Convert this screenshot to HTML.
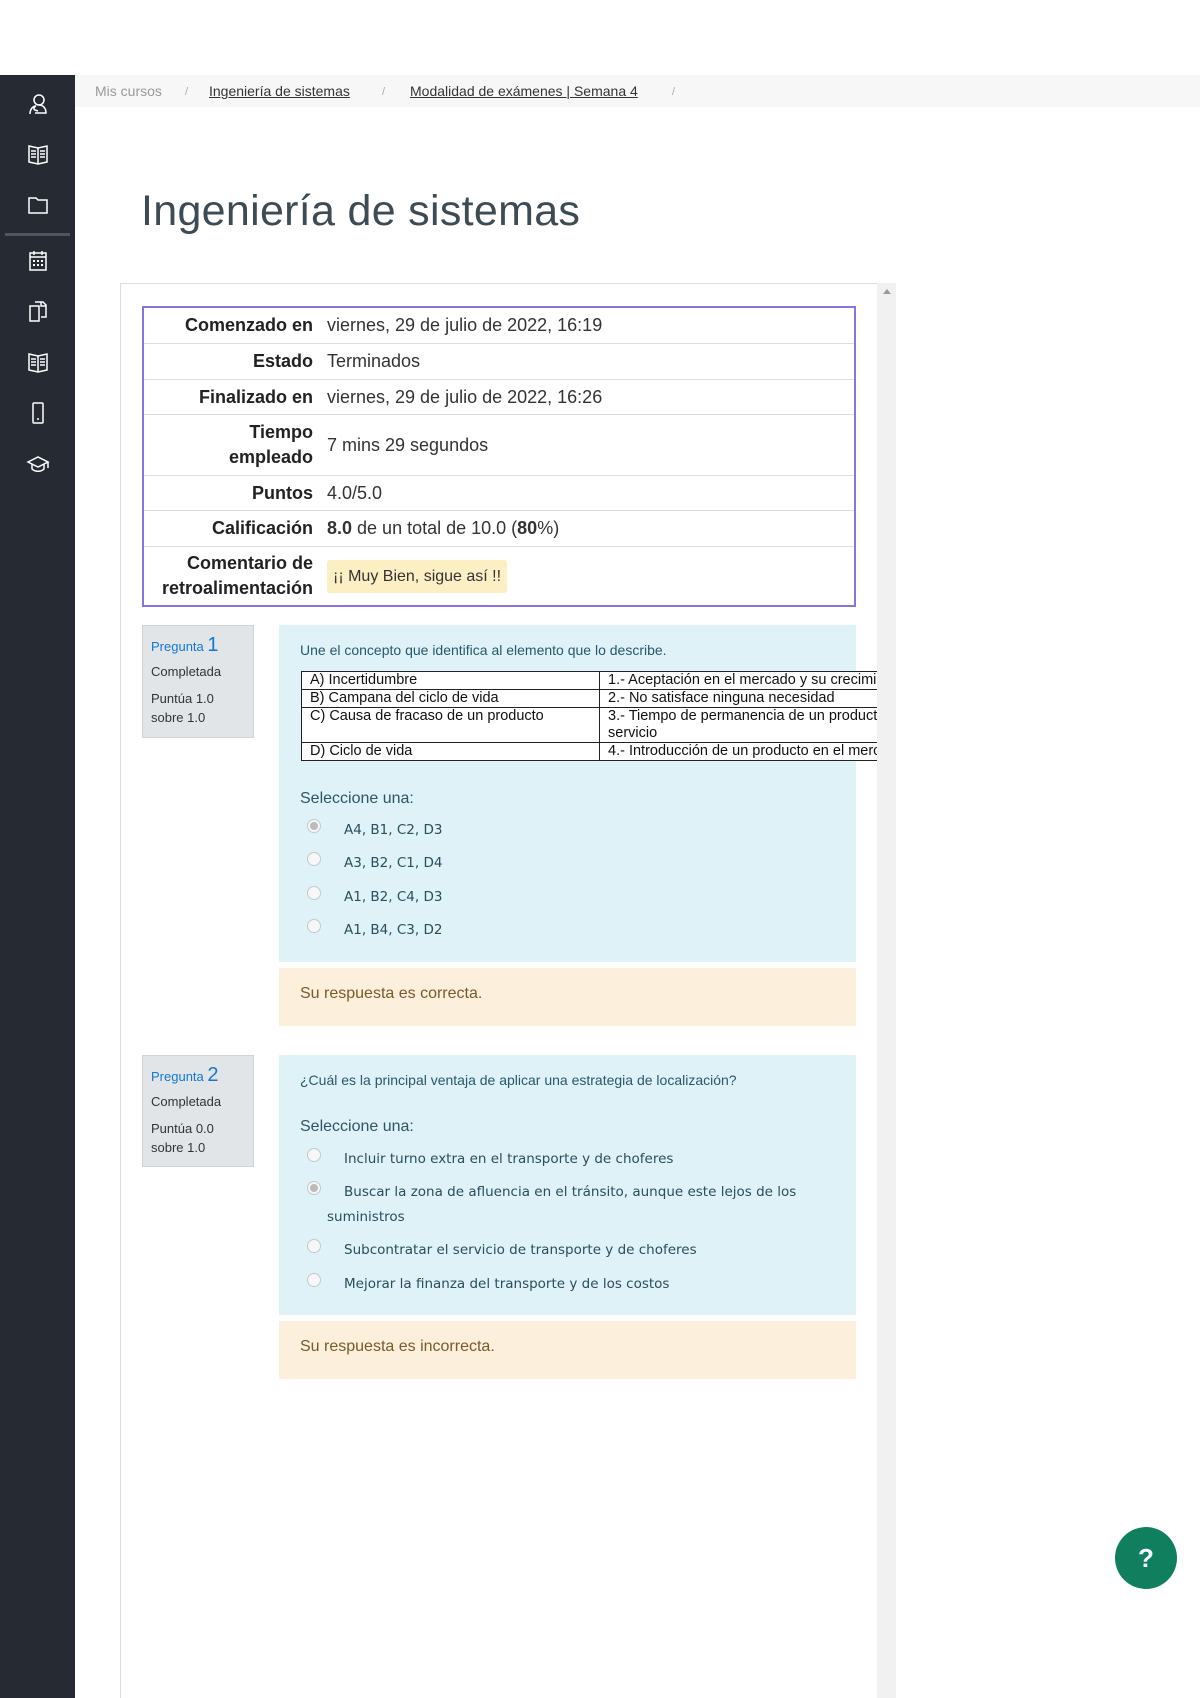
<!DOCTYPE html>
<html><head><meta charset="utf-8"><style>
*{box-sizing:border-box;margin:0;padding:0}
body{width:1200px;height:1698px;position:relative;background:#fff;font-family:"Liberation Sans","DejaVu Sans",sans-serif;color:#333;overflow:hidden}
.abs{position:absolute}
#side{left:0;top:75px;width:75px;height:1623px;background:#252a33}
.ic{position:absolute;left:26px;width:24px;height:24px}
#bc{left:75px;top:75px;width:1125px;height:32px;background:#f7f7f7;font-size:14px;color:#444}
#bc span{position:absolute;top:8px}
#bc u{color:#333}
h1{position:absolute;left:141px;top:187px;font-size:43px;font-weight:400;color:#3d4b55;letter-spacing:0.3px}
#box{left:120px;top:283px;width:758px;height:1415px;border:1px solid #ddd;border-bottom:none}
#sb{left:877px;top:283px;width:19px;height:1415px;background:#f1f1f1}
#sum{left:142px;top:306px;width:714px;height:301px;border:2px solid #8a73e0}
.r{position:absolute;left:0;width:710px;border-bottom:1px solid #ddd;font-size:18px}
.r .l{position:absolute;right:541px;text-align:right;font-weight:bold;color:#222;line-height:25px}
.r .v{position:absolute;left:183px;color:#333;line-height:25px}
.info{background:#e1e5e8;border:1px solid #cfd4d8;width:112px;font-size:13px;color:#333;padding:10px 8px;line-height:19px}
.info .p{color:#1177d1;font-size:13px}
.info .p b{font-size:20px;font-weight:400}
.qc{background:#def2f8;width:577px}
.fb{background:#fcefdc;width:577px;height:58px;font-size:16px;color:#7a5a2a;padding:17px 21px}
.t{font-size:14px;color:#28586a}
.sel{font-size:16px;color:#2f5563}
.opt{position:absolute;left:28px;font-family:"DejaVu Sans",sans-serif;font-size:13.5px;color:#2a4e5a}
.opt i{position:absolute;left:0;top:-2px;width:14px;height:14px;border:1px solid #c5c9cc;border-radius:50%;background:#f6f7f8}
.opt i.on::after{content:"";position:absolute;left:2px;top:2px;width:8px;height:8px;border-radius:50%;background:#bbb}
.opt span{position:absolute;left:37px;top:1px;white-space:nowrap}
table{border-collapse:collapse;font-size:14.5px;color:#111;background:#fff}
td{border:1px solid #222;padding:0 8px;line-height:17px;vertical-align:top;white-space:nowrap;overflow:hidden}
</style></head><body>
<div id="side" class="abs">
<svg class="ic" style="top:17px" viewBox="0 0 24 24" fill="none" stroke="#fff" stroke-width="1.5"><circle cx="13" cy="8" r="5"/><path d="M4 22c0-5 3-8 6-8M10 14c-2 1-3 3-1 4l3 1M13 13c4 0 7 3 7 8H9"/></svg>
<svg class="ic" style="top:67px" viewBox="0 0 24 24" fill="none" stroke="#fff" stroke-width="1.5"><path d="M3 4l9 2 9-2v16l-9 2-9-2zM12 6v16M5 9h5M5 12h5M5 15h5M14 9h5M14 12h5M14 15h5"/></svg>
<svg class="ic" style="top:118px" viewBox="0 0 24 24" fill="none" stroke="#fff" stroke-width="1.5"><path d="M3 5h7l2 2h9v13H3z"/></svg>
<div class="abs" style="left:5px;top:158px;width:65px;height:3px;background:#4c5560"></div>
<svg class="ic" style="top:174px" viewBox="0 0 24 24" fill="none" stroke="#fff" stroke-width="1.5"><rect x="4" y="4" width="16" height="17"/><path d="M8 2v4M16 2v4M4 8h16"/><g fill="#fff" stroke="none"><rect x="7" y="11" width="2" height="2"/><rect x="11" y="11" width="2" height="2"/><rect x="15" y="11" width="2" height="2"/><rect x="7" y="15" width="2" height="2"/><rect x="11" y="15" width="2" height="2"/><rect x="15" y="15" width="2" height="2"/></g></svg>
<svg class="ic" style="top:224px" viewBox="0 0 24 24" fill="none" stroke="#fff" stroke-width="1.5"><path d="M9 3h8l3 3v12h-5M4 7h9v15H4zM15 3v4h5"/></svg>
<svg class="ic" style="top:275px" viewBox="0 0 24 24" fill="none" stroke="#fff" stroke-width="1.5"><path d="M3 4l9 2 9-2v16l-9 2-9-2zM12 6v16M5 9h5M5 12h5M5 15h5M14 9h5M14 12h5M14 15h5"/></svg>
<svg class="ic" style="top:326px" viewBox="0 0 24 24" fill="none" stroke="#fff" stroke-width="1.5"><rect x="7" y="2" width="10" height="20" rx="1"/><path d="M11 18h2"/></svg>
<svg class="ic" style="top:377px" viewBox="0 0 24 24" fill="none" stroke="#fff" stroke-width="1.5"><path d="M2 10l10-5 10 5-10 5zM6 12v5c3 3 9 3 12 0v-5M22 10v6"/></svg>
</div>
<div id="bc" class="abs">
<span style="left:20px;color:#999">Mis cursos</span>
<span style="left:110px;color:#aaa;font-size:11px;top:11px">/</span>
<span style="left:134px"><u>Ingeniería de sistemas</u></span>
<span style="left:307px;color:#aaa;font-size:11px;top:11px">/</span>
<span style="left:335px"><u>Modalidad de exámenes | Semana 4</u></span>
<span style="left:597px;color:#aaa;font-size:11px;top:11px">/</span>
</div>
<h1>Ingeniería de sistemas</h1>
<div id="box" class="abs"></div>
<div id="sb" class="abs"><div style="position:absolute;left:6px;top:6px;border:4px solid transparent;border-bottom:5px solid #999;border-top:none"></div></div>
<div id="sum" class="abs">
<div class="r" style="top:0;height:36px"><div class="l" style="top:5px">Comenzado en</div><div class="v" style="top:5px">viernes, 29 de julio de 2022, 16:19</div></div>
<div class="r" style="top:36px;height:36px"><div class="l" style="top:5px">Estado</div><div class="v" style="top:5px">Terminados</div></div>
<div class="r" style="top:72px;height:35px"><div class="l" style="top:5px">Finalizado en</div><div class="v" style="top:5px">viernes, 29 de julio de 2022, 16:26</div></div>
<div class="r" style="top:107px;height:61px"><div class="l" style="top:5px">Tiempo<br>empleado</div><div class="v" style="top:18px">7 mins 29 segundos</div></div>
<div class="r" style="top:168px;height:35px"><div class="l" style="top:5px">Puntos</div><div class="v" style="top:5px">4.0/5.0</div></div>
<div class="r" style="top:203px;height:36px"><div class="l" style="top:5px">Calificación</div><div class="v" style="top:5px"><b>8.0</b> de un total de 10.0 (<b>80</b>%)</div></div>
<div class="r" style="top:239px;height:58px;border:none"><div class="l" style="top:4px">Comentario de<br>retroalimentación</div><div class="v" style="top:13px;background:#fcefc4;padding:4px 6px;border-radius:3px;font-size:16px">¡¡ Muy Bien, sigue así !!</div></div>
</div>

<div class="abs info" style="left:142px;top:625px;height:113px"><div class="p">Pregunta <b>1</b></div><div style="margin-top:6px">Completada</div><div style="margin-top:8px">Puntúa 1.0<br>sobre 1.0</div></div>
<div class="abs qc" style="left:279px;top:625px;height:337px">
<div class="t abs" style="left:21px;top:17px">Une el concepto que identifica al elemento que lo describe.</div>
<div class="abs" style="left:22px;top:46px;width:576px;height:90px;overflow:hidden">
<table style="width:640px"><col style="width:298px"><col>
<tr><td>A) Incertidumbre</td><td>1.- Aceptación en el mercado y su crecimiento</td></tr>
<tr><td>B) Campana del ciclo de vida</td><td>2.- No satisface ninguna necesidad</td></tr>
<tr><td>C) Causa de fracaso de un producto</td><td>3.- Tiempo de permanencia de un producto o<br>servicio</td></tr>
<tr><td>D) Ciclo de vida</td><td>4.- Introducción de un producto en el mercado</td></tr>
</table></div>
<div class="sel abs" style="left:21px;top:165px">Seleccione una:</div>
<div class="opt" style="top:196px"><i class="on"></i><span>A4, B1, C2, D3</span></div>
<div class="opt" style="top:229px"><i></i><span>A3, B2, C1, D4</span></div>
<div class="opt" style="top:263px"><i></i><span>A1, B2, C4, D3</span></div>
<div class="opt" style="top:296px"><i></i><span>A1, B4, C3, D2</span></div>
</div>
<div class="abs fb" style="left:279px;top:968px">Su respuesta es correcta.</div>

<div class="abs info" style="left:142px;top:1055px;height:112px"><div class="p">Pregunta <b>2</b></div><div style="margin-top:6px">Completada</div><div style="margin-top:8px">Puntúa 0.0<br>sobre 1.0</div></div>
<div class="abs qc" style="left:279px;top:1055px;height:260px">
<div class="t abs" style="left:21px;top:17px">¿Cuál es la principal ventaja de aplicar una estrategia de localización?</div>
<div class="sel abs" style="left:21px;top:63px">Seleccione una:</div>
<div class="opt" style="top:95px"><i></i><span>Incluir turno extra en el transporte y de choferes</span></div>
<div class="opt" style="top:128px"><i class="on"></i><span>Buscar la zona de afluencia en el tránsito, aunque este lejos de los</span></div>
<div class="opt" style="top:153px;left:48px"><span style="left:0">suministros</span></div>
<div class="opt" style="top:186px"><i></i><span>Subcontratar el servicio de transporte y de choferes</span></div>
<div class="opt" style="top:220px"><i></i><span>Mejorar la finanza del transporte y de los costos</span></div>
</div>
<div class="abs fb" style="left:279px;top:1321px">Su respuesta es incorrecta.</div>

<div class="abs" style="left:1115px;top:1527px;width:62px;height:62px;border-radius:50%;background:#0f7f5e;color:#fff;font-size:26px;font-weight:bold;text-align:center;line-height:62px">?</div>
</body></html>
